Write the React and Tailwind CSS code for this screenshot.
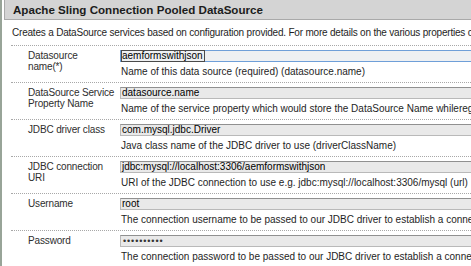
import React from 'react';

const rows = [
  {
    label: ['Datasource', 'name(*)'],
    value: 'aemformswithjson',
    focused: true,
    help: 'Name of this data source (required) (datasource.name)',
  },
  {
    label: ['DataSource Service', 'Property Name'],
    value: 'datasource.name',
    help: 'Name of the service property which would store the DataSource Name whileregistering the DataSource',
  },
  {
    label: ['JDBC driver class'],
    value: 'com.mysql.jdbc.Driver',
    help: 'Java class name of the JDBC driver to use (driverClassName)',
  },
  {
    label: ['JDBC connection', 'URI'],
    value: 'jdbc:mysql://localhost:3306/aemformswithjson',
    help: 'URI of the JDBC connection to use e.g. jdbc:mysql://localhost:3306/mysql (url)',
  },
  {
    label: ['Username'],
    value: 'root',
    help: 'The connection username to be passed to our JDBC driver to establish a connection. (username)',
  },
  {
    label: ['Password'],
    value: '••••••••••',
    password: true,
    help: 'The connection password to be passed to our JDBC driver to establish a connection. (password)',
  },
];

function Field({ row }) {
  return (
    <div className="h-[37px] border-t border-dotted border-[#a8a8a8] pt-[4px] flex">
      <div className="w-[109px] shrink-0 pl-[17px] leading-[11px] text-[#2e2e2e] tracking-[-0.15px]">
        {row.label.map((l) => (
          <div key={l}>{l}</div>
        ))}
      </div>
      <div className="flex-1 min-w-0">
        <div
          className={
            row.focused
              ? 'h-[12px] w-[400px] border border-[#6f9fd8] bg-[#eef0f2] flex items-center pl-[1px] leading-[10px]'
              : 'h-[12px] w-[400px] border border-[#b9b9b9] border-t-[#909090] bg-[#e9e9e9] flex items-center pl-[1px] leading-[10px]'
          }
        >
          {row.focused ? (
            <span className="outline outline-1 outline-[#4a4a4a] pr-[1px]">{row.value}</span>
          ) : row.password ? (
            <span className="text-[9px] tracking-[0.9px] pl-[1px] text-[#333]">{row.value}</span>
          ) : (
            <span>{row.value}</span>
          )}
        </div>
        <div className="mt-[3px] leading-[14px] pl-[1px] whitespace-nowrap text-[#1e1e1e]">{row.help}</div>
      </div>
    </div>
  );
}

export default function App() {
  return (
    <div
      className="w-[471px] h-[266px] overflow-hidden bg-white border-l-2 border-[#98a498] text-[10px]"
      style={{ fontFamily: '"Liberation Sans", Arial, sans-serif' }}
    >
      <div className="pl-[2px]">
        <div className="h-[20px] bg-[#d4d4d4] border-l border-b border-[#a9a9a9] pl-[8px] flex items-center font-bold text-[11.6px] text-[#1c1c1c] whitespace-nowrap">
          Apache Sling Connection Pooled DataSource
        </div>
        <div className="h-[25px] pl-[8px] pt-[6px] leading-[13px] whitespace-nowrap text-[#1e1e1e] tracking-[-0.2px]">
          Creates a DataSource services based on configuration provided. For more details on the various properties of this DataSource
        </div>
        <div className="pl-[7px]">
          {rows.map((r) => (
            <Field key={r.value} row={r} />
          ))}
        </div>
      </div>
    </div>
  );
}
